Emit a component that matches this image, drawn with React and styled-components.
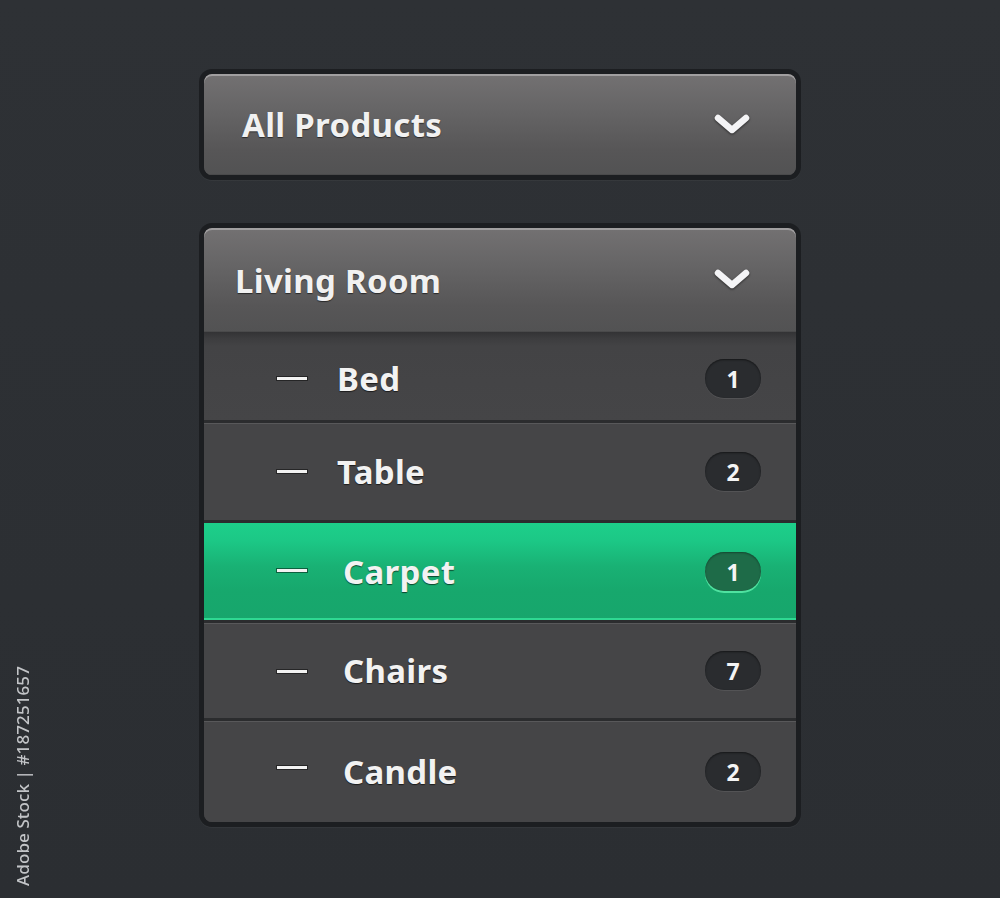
import React from "react";
import styled, { createGlobalStyle } from "styled-components";

const GlobalStyle = createGlobalStyle`
  html, body {
    margin: 0;
    padding: 0;
    background: #2c2f33;
  }
  body {
    font-family: "Noto Sans", "Open Sans", "Liberation Sans", sans-serif;
  }
`;

const Page = styled.div`
  position: relative;
  min-height: 898px;
  box-sizing: border-box;
  padding-top: 69px;
  display: flex;
  flex-direction: column;
  align-items: center;
  gap: 43px;
  background: linear-gradient(180deg, #2e3135 0%, #2b2e32 100%);
`;

const Card = styled.div`
  width: 602px;
  box-sizing: border-box;
  border: 5px solid #1c1e21;
  border-radius: 13px;
  overflow: hidden;
  background: #444446;
  box-shadow: 0 1px 0 rgba(255, 255, 255, 0.04);
`;

const Header = styled.div`
  height: ${(p) => p.$h}px;
  box-sizing: border-box;
  display: flex;
  align-items: center;
  justify-content: space-between;
  padding: 0 45px 0 ${(p) => p.$pl}px;
  background: linear-gradient(180deg, #737172 0%, #666566 35%, #575657 75%, #525253 100%);
  box-shadow: inset 0 2px 0 #a19fa0, inset 0 -1px 0 #4a4a4b;
  border-radius: 8px 8px 0 0;
`;

const Title = styled.span`
  color: #f1f1f1;
  font-size: 33px;
  font-weight: 700;
  letter-spacing: 0.3px;
  text-shadow: 0 1px 1px rgba(0, 0, 0, 0.55);
  line-height: 1;
`;

const Chevron = () => (
  <svg
    width="38"
    height="24"
    viewBox="0 0 38 24"
    style={{ filter: "drop-shadow(0 1px 1px rgba(0,0,0,0.55))" }}
  >
    <polyline
      points="5,5 19,17 33,5"
      fill="none"
      stroke="#f4f4f6"
      strokeWidth="6.5"
      strokeLinecap="round"
      strokeLinejoin="round"
    />
  </svg>
);

const List = styled.div`
  display: flex;
  flex-direction: column;
`;

const Row = styled.div`
  height: ${(p) => p.$h}px;
  box-sizing: border-box;
  display: flex;
  align-items: center;
  padding: ${(p) => (p.$first ? "5px" : "0")} 35px 0 73px;
  border-top: ${(p) => (p.$first ? "none" : "3px solid #2b2c2e")};
  background: ${(p) =>
    p.$active
      ? "linear-gradient(180deg, #1dcf8a 0%, #1cc886 18%, #19b174 45%, #17a86d 70%, #17a66c 100%)"
      : p.$first
      ? "linear-gradient(180deg, #333335 0%, #3c3c3e 6px, #434345 14px, #454547 100%)"
      : "#454547"};
  box-shadow: ${(p) =>
    p.$active
      ? "inset 0 -2px 0 #2fd892"
      : p.$first
      ? "none"
      : "inset 0 1px 0 #58585a"};
`;

const Dash = styled.span`
  width: 30px;
  height: 3px;
  margin-top: ${(p) => p.$dy}px;
  background: #f2f2f2;
  box-shadow: 0 0 0 1px rgba(0, 0, 0, 0.45);
  flex-shrink: 0;
`;

const Label = styled.span`
  margin-left: ${(p) => p.$ml}px;
  flex: 1;
  color: #f2f2f2;
  font-size: 33px;
  font-weight: 700;
  letter-spacing: 0.3px;
  line-height: 1;
  text-shadow: 0 1px 1px rgba(0, 0, 0, 0.6);
`;

const Badge = styled.span`
  width: 56px;
  height: 38px;
  border-radius: 19px;
  display: flex;
  align-items: center;
  justify-content: center;
  background: ${(p) => (p.$active ? "#1e6b48" : "#2a2c2f")};
  box-shadow: ${(p) =>
    p.$active
      ? "0 2px 0 #4fe2a0, inset 0 1px 2px rgba(0,0,0,0.35)"
      : "0 1px 0 #535355, inset 0 1px 2px rgba(0,0,0,0.5)"};
  color: #f4f4f4;
  font-size: 23px;
  font-weight: 700;
  line-height: 1;
  padding-top: 1px;
`;

const StockTag = styled.div`
  position: absolute;
  left: 11px;
  bottom: 12px;
  writing-mode: vertical-rl;
  transform: rotate(180deg);
  color: #c2c4c7;
  font-size: 17px;
  font-weight: 500;
  letter-spacing: 0.1px;
  white-space: nowrap;
`;

const items = [
  { name: "Bed", count: 1, h: 88, ml: 30, dy: 0 },
  { name: "Table", count: 2, h: 100, ml: 30, dy: 0 },
  { name: "Carpet", count: 1, h: 100, ml: 36, dy: -2, active: true },
  { name: "Chairs", count: 7, h: 98, ml: 36, dy: 2 },
  { name: "Candle", count: 2, h: 104, ml: 36, dy: -8 },
];

export default function App() {
  return (
    <>
      <GlobalStyle />
      <Page>
        <Card>
          <Header $h={101} $pl={38}>
            <Title>All Products</Title>
            <Chevron />
          </Header>
        </Card>

        <Card>
          <Header $h={104} $pl={31}>
            <Title>Living Room</Title>
            <Chevron />
          </Header>
          <List>
            {items.map((item, i) => (
              <Row key={item.name} $h={item.h} $first={i === 0} $active={item.active}>
                <Dash $dy={item.dy} />
                <Label $ml={item.ml}>{item.name}</Label>
                <Badge $active={item.active}>{item.count}</Badge>
              </Row>
            ))}
          </List>
        </Card>

        <StockTag>Adobe Stock | #187251657</StockTag>
      </Page>
    </>
  );
}
